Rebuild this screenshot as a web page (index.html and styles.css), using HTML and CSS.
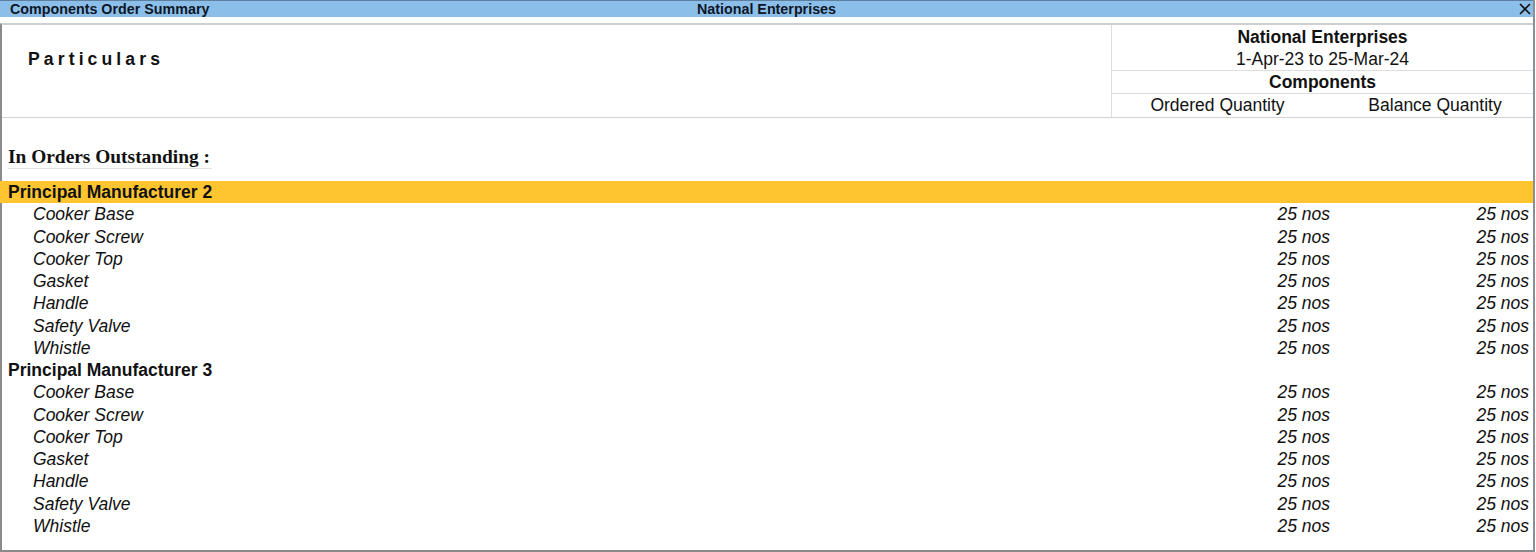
FILE: index.html
```html
<!DOCTYPE html>
<html>
<head>
<meta charset="utf-8">
<title>Components Order Summary</title>
<link rel="stylesheet" href="styles.css">
</head>
<body>
<div class="app">
  <div class="titlebar">
    <div class="title-left">Components Order Summary</div>
    <div class="title-center">National Enterprises</div>
    <div class="title-right">
      <svg class="close" width="12" height="12" viewBox="0 0 12 12"><path d="M1 1 L11 11 M11 1 L1 11" stroke="#111" stroke-width="1.6" fill="none"/></svg>
    </div>
  </div>
  <div class="gap"></div>
  <div class="panel">
    <div class="header">
      <div class="hdr-left"><span class="particulars">Particulars</span></div>
      <div class="hdr-right">
        <div class="hdr-company">
          <div class="bold">National Enterprises</div>
          <div>1-Apr-23 to 25-Mar-24</div>
        </div>
        <div class="hdr-comp bold">Components</div>
        <div class="hdr-cols">
          <div>Ordered Quantity</div>
          <div>Balance Quantity</div>
        </div>
      </div>
    </div>
    <div class="content">
      <div class="section-title">In Orders Outstanding :</div>
      <div class="rows">
        <div class="row group selected"><div>Principal Manufacturer 2</div><div></div><div></div></div>
        <div class="row item"><div>Cooker Base</div><div>25 nos</div><div>25 nos</div></div>
        <div class="row item"><div>Cooker Screw</div><div>25 nos</div><div>25 nos</div></div>
        <div class="row item"><div>Cooker Top</div><div>25 nos</div><div>25 nos</div></div>
        <div class="row item"><div>Gasket</div><div>25 nos</div><div>25 nos</div></div>
        <div class="row item"><div>Handle</div><div>25 nos</div><div>25 nos</div></div>
        <div class="row item"><div>Safety Valve</div><div>25 nos</div><div>25 nos</div></div>
        <div class="row item"><div>Whistle</div><div>25 nos</div><div>25 nos</div></div>
        <div class="row group"><div>Principal Manufacturer 3</div><div></div><div></div></div>
        <div class="row item"><div>Cooker Base</div><div>25 nos</div><div>25 nos</div></div>
        <div class="row item"><div>Cooker Screw</div><div>25 nos</div><div>25 nos</div></div>
        <div class="row item"><div>Cooker Top</div><div>25 nos</div><div>25 nos</div></div>
        <div class="row item"><div>Gasket</div><div>25 nos</div><div>25 nos</div></div>
        <div class="row item"><div>Handle</div><div>25 nos</div><div>25 nos</div></div>
        <div class="row item"><div>Safety Valve</div><div>25 nos</div><div>25 nos</div></div>
        <div class="row item"><div>Whistle</div><div>25 nos</div><div>25 nos</div></div>
      </div>
    </div>
  </div>
</div>
</body>
</html>
```

FILE: styles.css
```css
* { box-sizing: border-box; }
html, body {
  margin: 0;
  padding: 0;
  background: #fff;
  width: 1536px;
  height: 552px;
  overflow: hidden;
}
body {
  font-family: "Liberation Sans", Arial, sans-serif;
  color: #111;
}
.app {
  width: 1535px;
  height: 552px;
  display: flex;
  flex-direction: column;
  border-right: 2px solid #8a8f96;
}
.titlebar {
  height: 17px;
  background: #8bbee8;
  border-top: 1px solid #5f7f9e;
  display: grid;
  grid-template-columns: 1fr auto 1fr;
  align-items: center;
  font-size: 14.3px;
  font-weight: bold;
  color: #0d1626;
  line-height: 15px;
}
.title-left { padding-left: 10px; }
.title-right {
  display: flex;
  justify-content: flex-end;
  padding-right: 2px;
}
.close { display: block; }
.gap { height: 6px; }
.panel {
  flex: 1;
  border-top: 2px solid #cfcfcf;
  border-left: 2px solid #8a8a8a;
  border-bottom: 2px solid #8a8a8a;
  display: flex;
  flex-direction: column;
}
.bold { font-weight: bold; }
.header {
  display: grid;
  grid-template-columns: 1109px 1fr;
  height: 93px;
  border-bottom: 1px solid #d2d2d2;
  font-size: 17.5px;
}
.hdr-left {
  padding: 24px 0 0 26px;
}
.particulars {
  font-weight: bold;
  font-size: 17.6px;
  letter-spacing: 4.1px;
}
.hdr-right {
  border-left: 1px solid #dedede;
  display: flex;
  flex-direction: column;
  text-align: center;
}
.hdr-company {
  height: 46px;
  line-height: 22px;
  padding-top: 1px;
  border-bottom: 1px solid #dedede;
}
.hdr-comp {
  height: 23px;
  line-height: 22px;
  border-bottom: 1px solid #dedede;
}
.hdr-cols {
  display: grid;
  grid-template-columns: 211px 1fr;
  line-height: 22px;
}
.hdr-cols div:last-child { padding-left: 14px; }
.content {
  padding-top: 28px;
}
.section-title {
  display: inline-block;
  margin-left: 6px;
  font-family: "Liberation Serif", "Times New Roman", serif;
  font-weight: bold;
  font-size: 19.4px;
  line-height: 22px;
  border-bottom: 1px solid #e2e2e2;
  padding-right: 2px;
}
.rows {
  margin-top: 12px;
}
.row {
  display: grid;
  grid-template-columns: 1fr 199px 199px;
  height: 22.28px;
  line-height: 22px;
  font-size: 17.5px;
  padding-right: 4px;
}
.row div:nth-child(2), .row div:nth-child(3) { text-align: right; }
.group {
  font-weight: bold;
  padding-left: 6px;
}
.group.selected {
  background: #ffc530;
  margin-left: -2px;
  padding-left: 8px;
}
.item {
  font-style: italic;
  padding-left: 31px;
}
```
